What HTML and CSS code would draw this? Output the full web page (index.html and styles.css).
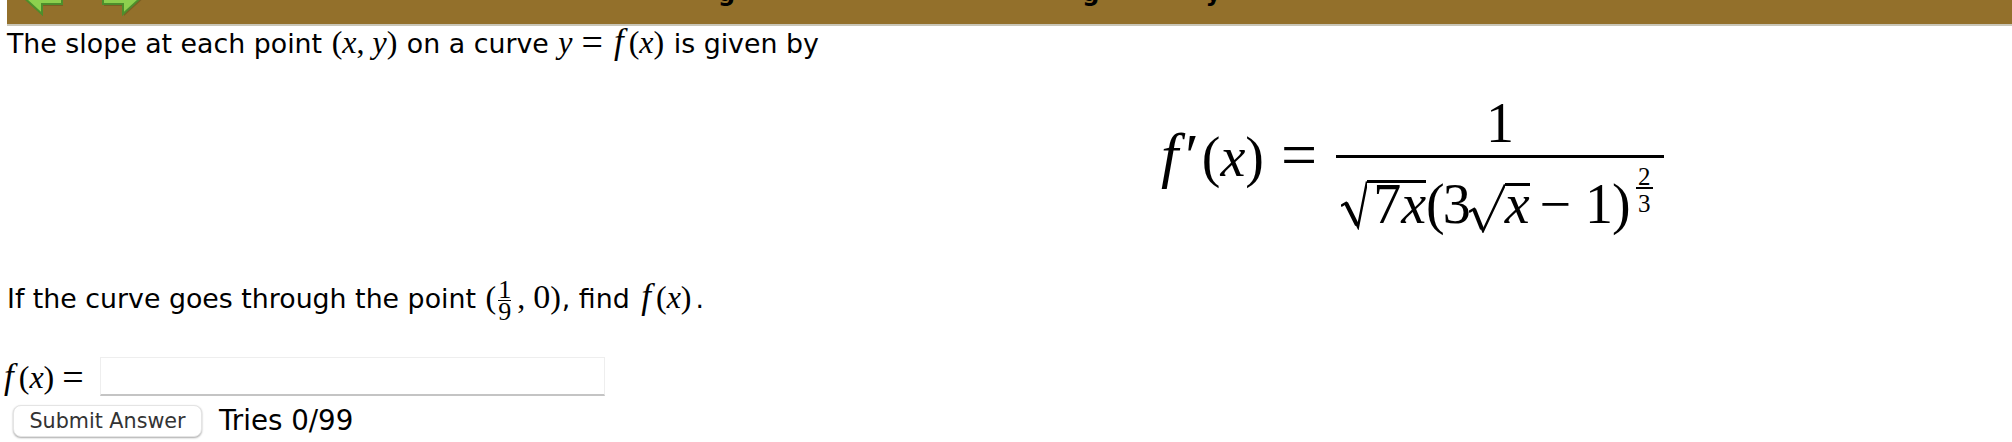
FILE: index.html
```html
<!DOCTYPE html>
<html lang="en">
<head>
<meta charset="utf-8">
<title>Problem</title>
<link rel="stylesheet" href="styles.css">
</head>
<body>
<header class="bar">
  <svg class="nav" width="46" height="18" viewBox="0 0 46 18"><path d="M2 -6 24 14V4H44V-6Z" fill="#2e2a0c" opacity=".25" transform="translate(1 2)"/><path d="M2 -6 24 14V4H44V-6Z" fill="#8dd04e" stroke="#4d8f2c" stroke-width="2"/></svg>
  <svg class="nav next" width="46" height="18" viewBox="0 0 46 18"><path d="M44 -6 22 14V4H2V-6Z" fill="#2e2a0c" opacity=".25" transform="translate(1 2)"/><path d="M44 -6 22 14V4H2V-6Z" fill="#8dd04e" stroke="#4d8f2c" stroke-width="2"/></svg>
  <span class="title t1">g</span><span class="title t2">g</span><span class="title t3">y</span>
</header>
<main class="page">
  <p class="line first">The slope at each point <span class="m">(<i>x</i>, <i>y</i>)</span> on a curve <span class="m"><i>y</i> <span class="eq-in">=</span> <i class="f">f</i>(<i>x</i>)</span> is given by</p>
  <div class="display">
    <span class="lhs"><i class="f big">f</i><span class="prime">′</span>(<i>x</i>)<span class="eq">=</span></span>
    <span class="frac">
      <span class="num">1</span>
      <span class="den">
        <span class="rad"><svg class="surd" width="26" height="50" viewBox="0 0 26 50"><path d="M0 26 5 23 17 47 26 1.5" fill="none" stroke="#000" stroke-width="2.4"/><path d="M5 23 16 45" fill="none" stroke="#000" stroke-width="4"/></svg><span class="over wide">7<i>x</i></span></span>
        <span class="plain tight">(3</span>
        <span class="rad low"><svg class="surd" width="36" height="50" viewBox="0 0 36 50"><path d="M0 29 5 26 14 48 36 1.5" fill="none" stroke="#000" stroke-width="2.4"/><path d="M5 26 13 46" fill="none" stroke="#000" stroke-width="4"/></svg><span class="over"><i>x</i></span></span>
        <span class="plain minus">−</span>
        <span class="plain one">1)</span>
        <span class="exp"><span>2</span><span class="expden">3</span></span>
      </span>
    </span>
  </div>
  <p class="line second-line">If the curve goes through the point <span class="m">(<span class="tiny"><span>1</span><span class="tinyden">9</span></span>,<span class="zero">0</span>)</span>, find <span class="m"><i class="f">f</i>(<i>x</i>)</span><span class="stop">.</span></p>
  <div class="answer"><span class="m label"><i class="f">f</i>(<i>x</i>)<span class="eq-small">=</span></span><input class="field" type="text"></div>
  <div class="actions"><button class="submit" type="button">Submit Answer</button><span class="tries">Tries 0/99</span></div>
</main>
</body>
</html>
```
FILE: styles.css
```css
html, body { margin: 0; padding: 0; background: #fff; overflow: hidden; }
body { font-family: "DejaVu Sans", sans-serif; color: #000; height: 442px; }
.bar { margin-left: 7px; height: 24px; background: #93702b; border-bottom: 2px solid #c9c6b8; display: flex; align-items: flex-start; padding-left: 11px; overflow: hidden; }
.nav { display: block; flex: none; overflow: visible; }
.next { margin-left: 37px; }
.title { font-family: "DejaVu Sans", sans-serif; font-weight: 700; font-size: 24px; line-height: 24px; margin-top: -19px; }
.t1 { margin-left: 571px; }
.t2 { margin-left: 347px; }
.t3 { margin-left: 106px; }
.page { padding-left: 7px; }
.line { margin: 0; font-size: 26.8px; }
.first { line-height: 28px; height: 31px; }
.m { font-family: "Liberation Serif", serif; font-size: 32px; line-height: 1; margin: 0 1px; }
.f { font-size: 35px; line-height: 0; padding: 0 5px 0 2px; }
.eq-in { font-size: 38px; line-height: 0; margin: 0 1px; vertical-align: -2px; }
.display { display: flex; align-items: flex-start; margin: 38px 0 0 1150px; font-family: "Liberation Serif", serif; font-size: 56px; height: 140px; }
.lhs { width: 179px; flex: none; line-height: 60px; margin-top: 30px; white-space: nowrap; }
.f.big { padding: 0 2px 0 4px; font-size: 62px; line-height: 60px; }
.prime { margin: 0 3px 0 5px; font-size: 62px; }
.eq { margin-left: 17px; font-size: 64px; }
.frac { display: flex; flex-direction: column; width: 328px; }
.num { border-bottom: 3px solid #000; text-align: center; line-height: 56px; padding-bottom: 4px; }
.den { display: flex; align-items: flex-start; padding: 22px 0 0 5px; }
.rad { display: flex; align-items: flex-start; }
.rad.low { margin-top: 3px; }
.surd { display: block; flex: none; }
.over { border-top: 3px solid #000; line-height: 36px; }
.over.wide { width: 59px; line-height: 42px; text-align: right; }
.plain { margin-top: 3px; line-height: 42px; }
.tight { letter-spacing: -2px; }
.minus { margin-left: 10px; }
.one { margin-left: 14px; letter-spacing: -1px; }
.exp { display: flex; flex-direction: column; font-size: 25px; margin: -14px 0 0 6px; width: 17px; text-align: center; line-height: 21px; }
.expden { border-top: 2px solid #000; line-height: 30px; }
.tiny { display: inline-flex; flex-direction: column; font-size: 26px; line-height: 21px; vertical-align: middle; text-align: center; margin: 0 6px 0 2px; }
.tinyden { border-top: 1px solid #000; }
.zero { font-size: 34px; margin-left: 8px; }
.stop { margin-left: 3px; }
.second-line { margin-top: 43px; line-height: 42px; height: 40px; }
.answer { display: flex; align-items: center; margin: 39px 0 0 -5px; height: 39px; }
.label { width: 98px; flex: none; white-space: nowrap; margin: 0; }
.eq-small { margin-left: 8px; font-size: 38px; line-height: 0; vertical-align: -2px; }
.field { width: 505px; height: 39px; box-sizing: border-box; border: 1px solid #eee; border-bottom: 2px solid #c4c4c4; padding: 0; background: #fff; }
.actions { display: flex; align-items: center; gap: 17px; margin: 8px 0 0 6px; }
.submit { font-family: "DejaVu Sans", sans-serif; font-size: 20.7px; height: 32px; width: 189px; background: #fff; border: 1px solid #e4e4e4; border-radius: 8px; box-shadow: 0 1px 2px #aaa; color: #333; padding: 0; }
.tries { font-size: 27.7px; }
```
